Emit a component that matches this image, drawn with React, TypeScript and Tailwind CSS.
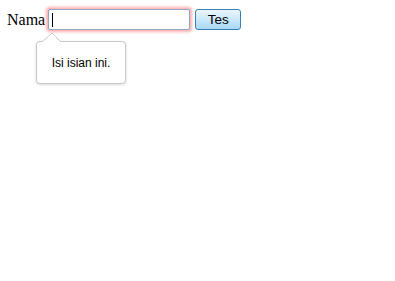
export default function App() {
  return (
    <div className="relative w-[395px] h-[281px] bg-white">
      <div className="flex items-center pl-[7px] pt-[9px]">
        <span className="text-[16px] leading-[20px] text-black mr-[3px]" style={{ fontFamily: '"Liberation Serif", serif' }}>
          Nama
        </span>
        <div className="relative w-[142px] h-[21px] border border-[#8fa6c4] rounded-[2px] bg-white shadow-[0_0_3px_2px_rgba(255,110,110,0.55)]">
          <div className="absolute left-[3px] top-[3px] w-[1px] h-[14px] bg-black" />
        </div>
        <button
          className="ml-[5px] w-[46px] h-[21px] border border-[#3c7fb1] rounded-[3px] bg-gradient-to-b from-[#eaf6fd] to-[#a7d9f5] text-[13.5px] leading-[19px] text-black"
          style={{ fontFamily: '"Liberation Sans", Arial, sans-serif' }}
        >
          Tes
        </button>
      </div>
      <div className="absolute left-[36px] top-[41px] w-[90px] h-[43px] rounded-[4px] border border-[#c8c8c8] bg-white shadow-[0_1px_3px_rgba(0,0,0,0.15)] flex items-center justify-center">
        <span className="text-[12px] text-black" style={{ fontFamily: '"Liberation Sans", Arial, sans-serif' }}>
          Isi isian ini.
        </span>
      </div>
      <svg className="absolute left-[42px] top-[32px]" width="20" height="11" viewBox="0 0 20 11">
        <path d="M0 10 L10 1 L19 10" fill="white" stroke="#c8c8c8" strokeWidth="1" />
        <rect x="1" y="9.5" width="17" height="2" fill="white" />
      </svg>
    </div>
  );
}
